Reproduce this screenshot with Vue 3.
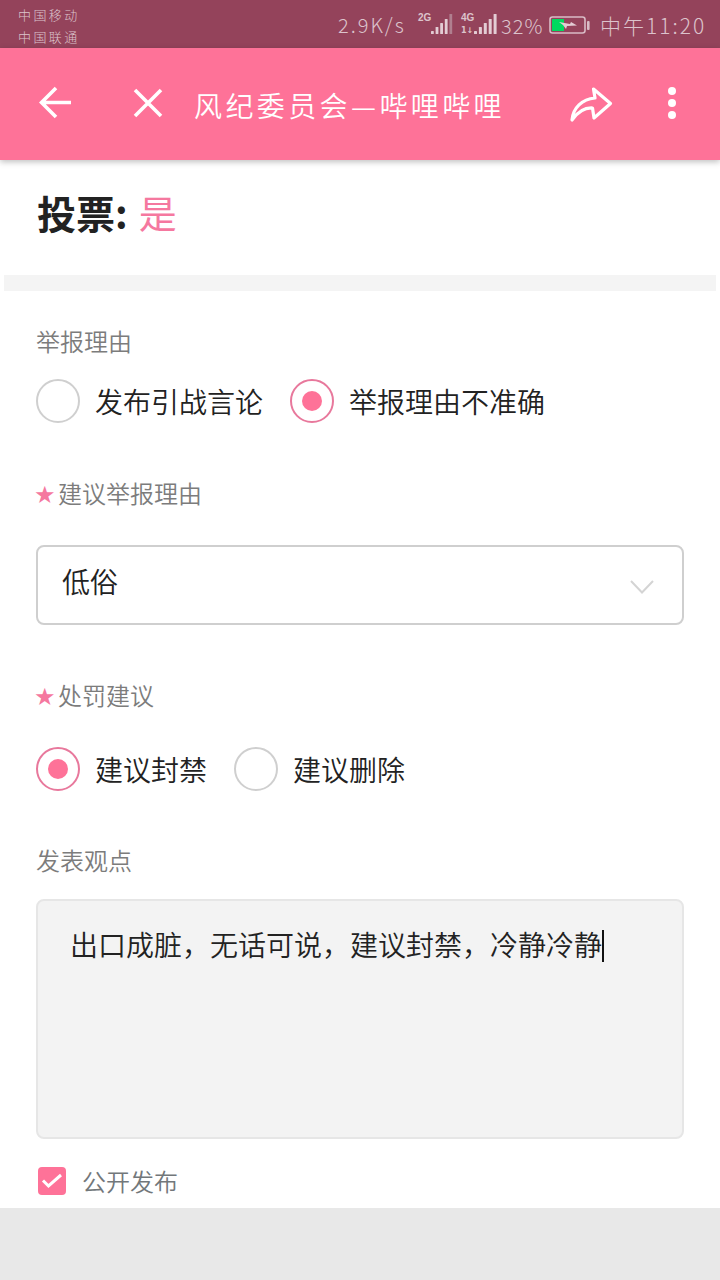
<script setup>
const reasons = [
  { text: '发布引战言论', on: false },
  { text: '举报理由不准确', on: true },
]
const penalties = [
  { text: '建议封禁', on: true },
  { text: '建议删除', on: false },
]
const bars = [3, 7, 11, 15, 20]
</script>

<template>
  <div class="page">
    <header class="status">
      <div class="carriers">
        <span>中国移动</span>
        <span>中国联通</span>
      </div>
      <div class="status-right">
        <span class="speed">2.9K/s</span>
        <div class="net net-2g">
          <span class="net-tag">2G</span>
          <svg class="bars" width="23" height="21" viewBox="0 0 23 21">
            <rect v-for="(h, i) in bars" :key="i" :x="i * 4.6" :y="21 - h" width="2.8" :height="h" rx="0.6" :fill="i === 4 ? '#b07f8f' : '#e3ccd4'" />
          </svg>
        </div>
        <div class="net net-4g">
          <div class="net-stack">
            <span class="net-tag">4G</span>
            <span class="net-sub">1↓</span>
          </div>
          <svg class="bars" width="24" height="21" viewBox="0 0 24 21">
            <rect v-for="(h, i) in bars" :key="i" :x="i * 4.9" :y="21 - h" width="3" :height="h" rx="0.6" fill="#e3ccd4" />
          </svg>
        </div>
        <span class="percent">32%</span>
        <svg class="battery" width="41" height="18" viewBox="0 0 41 18">
          <rect x="1" y="1" width="35" height="16" rx="2.5" fill="none" stroke="#d9bcc6" stroke-width="1.6" />
          <rect x="3" y="3" width="12" height="12" fill="#00d95f" />
          <path d="M10 6 L21 8 L22 6 L28 9.5 L18 10 L17 13 L14 9 Z" fill="#e3ccd4" />
          <rect x="38" y="5" width="2.6" height="9" rx="1" fill="#d9bcc6" />
        </svg>
        <span class="clock">中午11:20</span>
      </div>
    </header>

    <nav class="toolbar">
      <svg class="back" width="34" height="34" viewBox="0 0 34 34">
        <path d="M32 16.500 H3 M17 2 L2.500 16.500 L17 31" fill="none" stroke="#fff" stroke-width="3.600" />
      </svg>
      <svg class="close" width="30" height="30" viewBox="0 0 30 30">
        <path d="M2 2 L28 28 M28 2 L2 28" fill="none" stroke="#fff" stroke-width="3.600" />
      </svg>
      <span class="title">风纪委员会—哔哩哔哩</span>
      <svg class="share" width="44" height="38" viewBox="0 0 44 38">
        <path d="M3 35 C4 23 13 14 26 13 L24.500 4 L41.500 18.500 L25 33 L23.500 23 C15 22.500 8 28 3 35 Z" fill="none" stroke="#fff" stroke-width="3.200" stroke-linejoin="round" />
      </svg>
      <div class="dots">
        <i></i><i></i><i></i>
      </div>
    </nav>

    <section class="vote">
      <strong>投票:</strong>
      <span>是</span>
    </section>
    <div class="divider"></div>

    <main class="form">
      <div class="label first">举报理由</div>
      <div class="radios radios-one">
        <div v-for="r in reasons" :key="r.text" class="radio-item">
          <span class="radio" :class="{ on: r.on }"></span>
          <span class="radio-text">{{ r.text }}</span>
        </div>
      </div>

      <div class="label gap"><span class="star">★</span>建议举报理由</div>
      <div class="select">
        <span>低俗</span>
        <svg width="24" height="14" viewBox="0 0 24 14">
          <path d="M1 1 L12 12.500 L23 1" fill="none" stroke="#d4d4d4" stroke-width="2" />
        </svg>
      </div>

      <div class="label gap"><span class="star">★</span>处罚建议</div>
      <div class="radios radios-two">
        <div v-for="r in penalties" :key="r.text" class="radio-item">
          <span class="radio" :class="{ on: r.on }"></span>
          <span class="radio-text">{{ r.text }}</span>
        </div>
      </div>

      <div class="label gap-view">发表观点</div>
      <div class="textarea">
        <span>出口成脏，无话可说，建议封禁，冷静冷静</span><i class="caret"></i>
      </div>

      <div class="public">
        <span class="check">
          <svg width="28" height="28" viewBox="0 0 28 28">
            <path d="M5 13.500 L10.500 19 L23 8" fill="none" stroke="#fff" stroke-width="3" />
          </svg>
        </span>
        <span>公开发布</span>
      </div>
    </main>

    <footer class="footer"></footer>
  </div>
</template>

<style scoped>
.page {
  width: 720px;
  height: 1280px;
  display: flex;
  flex-direction: column;
  overflow: hidden;
  background: #fff;
  font-family: "Noto Sans CJK SC", "Liberation Sans", sans-serif;
  color: #222;
}

.status {
  height: 48px;
  flex: none;
  display: flex;
  justify-content: space-between;
  background: #94435b;
  color: #dcc3cc;
}
.carriers {
  display: flex;
  flex-direction: column;
  padding: 4px 0 0 18px;
  font-size: 13px;
  line-height: 22px;
  letter-spacing: 2.4px;
  font-weight: 300;
}
.status-right {
  display: flex;
  align-items: flex-start;
  padding-right: 16px;
}
.speed {
  margin: 11px 0 0 0;
  font-size: 20px;
  font-weight: 300;
  line-height: 28px;
  letter-spacing: 2px;
  width: 80px;
  white-space: nowrap;
}
.net {
  display: flex;
  align-items: flex-start;
}
.net-tag {
  display: block;
  font-family: "Liberation Sans", sans-serif;
  font-size: 10px;
  font-weight: 700;
  line-height: 10px;
  width: 13px;
}
.net-2g .net-tag {
  margin-top: 13px;
}
.net-2g .bars {
  margin-top: 13px;
}
.net-2g {
  width: 43px;
}
.net-stack {
  margin-top: 13px;
  width: 13px;
  display: flex;
  flex-direction: column;
}
.net-sub {
  font-family: "DejaVu Sans", sans-serif;
  font-size: 8px;
  font-weight: 700;
  line-height: 10px;
  margin-top: 3px;
}
.net-4g .bars {
  margin-top: 13px;
}
.percent {
  margin: 12px 8px 0 3px;
  font-size: 20px;
  font-weight: 300;
  line-height: 28px;
  letter-spacing: 1px;
  width: 40px;
  white-space: nowrap;
}
.battery {
  margin-top: 16px;
}
.clock {
  margin: 11px 0 0 10px;
  font-size: 21px;
  font-weight: 300;
  line-height: 28px;
  letter-spacing: 2px;
  width: 104px;
  white-space: nowrap;
}

.toolbar {
  height: 112px;
  flex: none;
  position: relative;
  display: flex;
  align-items: center;
  background: #fe7298;
  box-shadow: 0 2px 6px rgba(0, 0, 0, 0.25);
  color: #fff;
}
.back {
  margin-left: 39px;
  margin-top: -3px;
}
.close {
  margin-left: 60px;
  margin-top: -3px;
}
.title {
  margin-left: 31px;
  width: 375px;
  margin-top: 2px;
  font-size: 28px;
  font-weight: 350;
  line-height: 40px;
  letter-spacing: 3.400px;
  white-space: nowrap;
}
.share {
  margin-top: 0;
  margin-left: 0;
}
.dots {
  margin-left: 55px;
  margin-top: -3px;
  display: flex;
  flex-direction: column;
  gap: 4px;
}
.dots i {
  display: block;
  width: 8px;
  height: 8px;
  border-radius: 50%;
  background: #fff;
}

.vote {
  height: 115px;
  flex: none;
  padding: 24px 0 0 37px;
  box-sizing: border-box;
  display: flex;
  align-items: flex-start;
  font-size: 38px;
  line-height: 56px;
}
.vote strong {
  font-size: 39px;
  font-weight: 700;
  color: #222;
  letter-spacing: 0;
}
.vote span {
  margin-left: 11px;
  font-weight: 400;
  color: #f5789f;
}

.divider {
  height: 16px;
  flex: none;
  margin: 0 4px;
  background: #f4f4f4;
}

.form {
  padding: 0 36px;
  display: flex;
  flex-direction: column;
  flex: none;
}
.label {
  height: 34px;
  display: flex;
  align-items: center;
  font-size: 24px;
  font-weight: 350;
  line-height: 34px;
  color: #7c7c7c;
}
.label.first {
  margin-top: 33px;
}
.label.gap {
  margin-top: 53px;
}
.label.gap-view {
  margin-top: 52px;
}
.star {
  width: 22px;
  height: 34px;
  flex: none;
  font-family: "DejaVu Sans", sans-serif;
  font-size: 19px;
  line-height: 37px;
  color: #f5789f;
  transform: scale(1.250);
  transform-origin: 9px 19px;
}
.radios {
  display: flex;
}
.radios-one {
  margin-top: 21px;
  gap: 27px;
}
.radios-two {
  margin-top: 35px;
  gap: 27px;
}
.radio-item {
  display: flex;
  align-items: center;
}
.radio {
  width: 44px;
  height: 44px;
  box-sizing: border-box;
  border: 2px solid #cfcfcf;
  border-radius: 50%;
  display: flex;
  align-items: center;
  justify-content: center;
  flex: none;
}
.radio.on {
  border-color: #e8789c;
}
.radio.on::after {
  content: "";
  width: 20px;
  height: 20px;
  border-radius: 50%;
  background: #fe7298;
}
.radio-text {
  margin-left: 15px;
  font-size: 28px;
  font-weight: 350;
  line-height: 44px;
  color: #222;
}

.select {
  margin-top: 35px;
  height: 80px;
  box-sizing: border-box;
  border: 2px solid #cfcfcf;
  border-radius: 8px;
  padding: 0 28px 0 24px;
  display: flex;
  align-items: center;
  justify-content: space-between;
  font-size: 28px;
  font-weight: 350;
  line-height: 70px;
}
.select span {
  margin-top: -8px;
}
.select svg {
  margin-top: 4px;
}

.textarea {
  margin-top: 22px;
  height: 240px;
  box-sizing: border-box;
  border: 2px solid #e6e6e6;
  border-radius: 8px;
  background: #f3f3f3;
  padding: 23px 0 0 32px;
  display: flex;
  align-items: flex-start;
  font-size: 28px;
  font-weight: 350;
  line-height: 40px;
  color: #222;
}
.caret {
  display: block;
  width: 2px;
  height: 32px;
  margin-top: 6px;
  background: #111;
}

.public {
  margin-top: 28px;
  height: 28px;
  padding-left: 2px;
  display: flex;
  align-items: center;
  font-size: 24px;
  font-weight: 350;
  line-height: 28px;
  color: #72777a;
}
.check {
  width: 28px;
  height: 28px;
  margin-right: 16px;
  border-radius: 4px;
  background: #fe7298;
  display: block;
  flex: none;
}
.check svg {
  display: block;
}

.footer {
  margin-top: 13px;
  flex: 1;
  background: #e8e8e8;
}
</style>
